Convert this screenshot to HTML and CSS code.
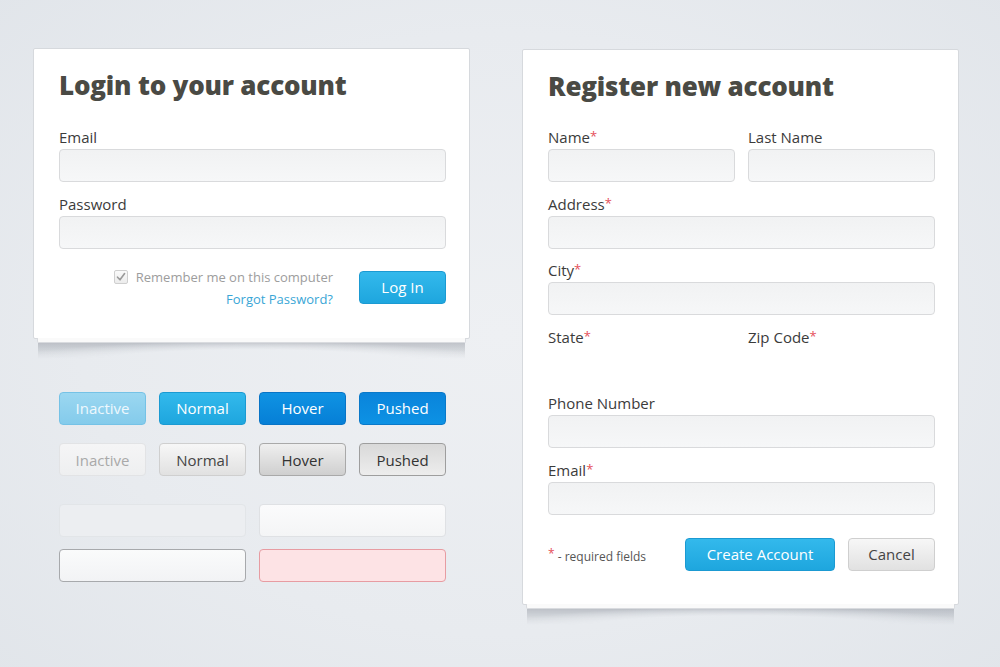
FILE: index.html
```html
<!DOCTYPE html>
<html>
<head>
<meta charset="utf-8">
<link rel="stylesheet" href="styles.css">
</head>
<body>
<div class="page">
  <div class="left">
    <div class="card login">
      <h1 class="title">Login to your account</h1>
      <div class="field">
        <label class="label">Email</label>
        <div class="input"></div>
      </div>
      <div class="field">
        <label class="label">Password</label>
        <div class="input"></div>
      </div>
      <div class="login-actions">
        <div class="remember">
          <div class="check-row">
            <span class="checkbox"><svg width="10" height="10" viewBox="0 0 10 10"><path d="M1.5 5.2 L4 7.8 L8.6 1.6" fill="none" stroke="#9a9a9a" stroke-width="1.6" stroke-linecap="round" stroke-linejoin="round"/></svg></span>
            <span class="remember-text">Remember me on this computer</span>
          </div>
          <a class="forgot">Forgot Password?</a>
        </div>
        <div class="btn btn-blue btn-login">Log In</div>
      </div>
    </div>

    <div class="states">
      <div class="btn btn-blue-inactive">Inactive</div>
      <div class="btn btn-blue">Normal</div>
      <div class="btn btn-blue-hover">Hover</div>
      <div class="btn btn-blue-pushed">Pushed</div>
      <div class="btn btn-gray-inactive">Inactive</div>
      <div class="btn btn-gray">Normal</div>
      <div class="btn btn-gray-hover">Hover</div>
      <div class="btn btn-gray-pushed">Pushed</div>
    </div>

    <div class="input-states">
      <div class="input-s disabled"></div>
      <div class="input-s normal"></div>
      <div class="input-s focus"></div>
      <div class="input-s error"></div>
    </div>
  </div>

  <div class="right">
    <div class="card register">
      <h1 class="title">Register new account</h1>
      <div class="row2">
        <div class="field">
          <label class="label">Name<span class="req">*</span></label>
          <div class="input"></div>
        </div>
        <div class="field">
          <label class="label">Last Name</label>
          <div class="input"></div>
        </div>
      </div>
      <div class="field">
        <label class="label">Address<span class="req">*</span></label>
        <div class="input"></div>
      </div>
      <div class="field">
        <label class="label">City<span class="req">*</span></label>
        <div class="input"></div>
      </div>
      <div class="row2">
        <div class="field">
          <label class="label">State<span class="req">*</span></label>
          <div class="spacer"></div>
        </div>
        <div class="field">
          <label class="label">Zip Code<span class="req">*</span></label>
          <div class="spacer"></div>
        </div>
      </div>
      <div class="field">
        <label class="label">Phone Number</label>
        <div class="input"></div>
      </div>
      <div class="field last">
        <label class="label">Email<span class="req">*</span></label>
        <div class="input"></div>
      </div>
      <div class="reg-actions">
        <div class="note"><span class="req">*</span> - required fields</div>
        <div class="btn btn-blue btn-create">Create Account</div>
        <div class="btn btn-gray btn-cancel">Cancel</div>
      </div>
    </div>
  </div>
</div>
</body>
</html>
```

FILE: styles.css
```css
html, body {
  margin: 0;
  padding: 0;
}
body {
  width: 1000px;
  height: 667px;
  overflow: hidden;
  font-family: "Open Sans", "Noto Sans", sans-serif;
  background: radial-gradient(ellipse 70% 75% at 50% 50%, #eef0f3 0%, #e8ebef 60%, #e1e5ea 100%);
}
.page {
  display: flex;
  align-items: flex-start;
  gap: 52px;
  padding: 48px 0 0 33px;
}
.left {
  width: 437px;
  display: flex;
  flex-direction: column;
}
.right {
  width: 437px;
  margin-top: 1px;
}
.card {
  position: relative;
  box-sizing: border-box;
  width: 437px;
  background: #fff;
  border: 1px solid #d6d9dd;
  border-radius: 2px;
  padding: 20px 23px 33px 25px;
}
.card.login {
  padding-bottom: 30px;
}
.card::before {
  content: "";
  position: absolute;
  left: 3px;
  right: 3px;
  bottom: -5px;
  height: 4px;
  background: #fafafa;
  border: 1px solid #d9dbdf;
  border-top: none;
  border-radius: 0 0 2px 2px;
}
.card::after {
  content: "";
  position: absolute;
  left: 4px;
  right: 4px;
  top: calc(100% + 5px);
  height: 16px;
  background: linear-gradient(to bottom, rgba(130,136,146,0.42), rgba(130,136,146,0));
  -webkit-mask-image: radial-gradient(ellipse 60% 130% at 50% 120%, transparent 60%, #000 100%);
  mask-image: radial-gradient(ellipse 60% 130% at 50% 120%, transparent 60%, #000 100%);
}
.title {
  margin: 0 0 27px 0;
  font-size: 26px;
  line-height: 32px;
  font-weight: 800;
  color: #4a4a44;
  letter-spacing: -0.2px;
}
.register .title {
  margin-bottom: 26px;
}
.field {
  display: flex;
  flex-direction: column;
  margin-bottom: 12.6px;
}
.field.last {
  margin-bottom: 0;
}
.label {
  font-size: 15px;
  line-height: 18px;
  height: 18px;
  color: #3b3b3b;
  margin-bottom: 3px;
}
.req {
  color: #e5505a;
  font-size: 13px;
  line-height: 0;
  vertical-align: 2px;
}
.input {
  box-sizing: border-box;
  height: 33px;
  background: linear-gradient(to bottom, #f1f2f3, #f6f7f8);
  border: 1px solid #d9dadc;
  border-radius: 4px;
}
.spacer {
  height: 33px;
}
.row2 {
  display: grid;
  grid-template-columns: 187px 187px;
  column-gap: 13px;
}
.login-actions {
  display: flex;
  justify-content: flex-end;
  align-items: flex-start;
  gap: 26px;
  margin-top: 19px;
}
.btn-login {
  margin-top: 3px;
}
.remember {
  display: flex;
  flex-direction: column;
  align-items: flex-end;
}
.check-row {
  display: flex;
  align-items: center;
  gap: 8px;
}
.checkbox {
  box-sizing: border-box;
  width: 14px;
  height: 14px;
  border: 1px solid #cfcfcf;
  border-radius: 2px;
  background: linear-gradient(#fafafa, #ececec);
  display: flex;
  align-items: center;
  justify-content: center;
}
.remember-text {
  font-size: 13px;
  line-height: 18px;
  color: #9d9d9d;
}
.forgot {
  font-size: 13px;
  line-height: 18px;
  margin-top: 4px;
  color: #39a6d6;
}
.btn {
  box-sizing: border-box;
  width: 87px;
  height: 33px;
  border-radius: 4px;
  display: flex;
  align-items: center;
  justify-content: center;
  font-size: 15px;
  border: 1px solid transparent;
}
.btn-blue {
  background: linear-gradient(to bottom, #33b9ec, #1ea6de);
  border-color: #1b9ad2;
  color: #fff;
}
.btn-blue-inactive {
  background: linear-gradient(to bottom, #9bd7f1, #84cbeb);
  border-color: #75c2e6;
  color: #eef8fd;
}
.btn-blue-hover {
  background: linear-gradient(to bottom, #0f93e3, #067fd6);
  border-color: #0874c6;
  color: #fff;
}
.btn-blue-pushed {
  background: linear-gradient(to bottom, #0a84db, #0d92e4);
  border-color: #0a79c9;
  color: #fff;
}
.btn-gray-inactive {
  background: linear-gradient(to bottom, #f5f5f6, #eeeff0);
  border-color: #e2e3e5;
  color: #a9a9a9;
}
.btn-gray {
  background: linear-gradient(to bottom, #f7f7f7, #e1e1e1);
  border-color: #cfcfcf;
  color: #444;
}
.btn-gray-hover {
  background: linear-gradient(to bottom, #efefef, #cfcfcf);
  border-color: #a9a9a9;
  color: #333;
}
.btn-gray-pushed {
  background: linear-gradient(to bottom, #d9d9d9, #ededed);
  border-color: #9e9e9e;
  color: #333;
}
.states {
  display: grid;
  grid-template-columns: repeat(4, 87px);
  column-gap: 13px;
  row-gap: 18px;
  padding-left: 26px;
  margin-top: 53px;
}
.states .btn-gray,
.states .btn-gray-hover,
.states .btn-gray-pushed,
.states .btn-gray-inactive {
  padding-top: 2px;
}
.input-states {
  display: grid;
  grid-template-columns: 187px 187px;
  column-gap: 13px;
  row-gap: 12px;
  padding-left: 26px;
  margin-top: 28px;
}
.input-s {
  box-sizing: border-box;
  height: 33px;
  border-radius: 4px;
  border: 1px solid transparent;
}
.input-s.disabled {
  background: #eceef1;
  border-color: #e2e5e8;
}
.input-s.normal {
  background: linear-gradient(to bottom, #fbfbfc, #f4f5f6);
  border-color: #dfe1e4;
}
.input-s.focus {
  background: linear-gradient(to bottom, #fafbfb, #f2f3f5);
  border-color: #a7a9ac;
}
.input-s.error {
  background: #fde3e5;
  border-color: #e79ca2;
}
.reg-actions {
  display: flex;
  align-items: center;
  margin-top: 23px;
}
.note {
  font-size: 12px;
  line-height: 18px;
  color: #555;
  width: 137px;
  margin-top: 5px;
}
.note .req {
  font-size: 12px;
  vertical-align: 3px;
}
.btn-create {
  width: 150px;
  height: 33px;
}
.btn-cancel {
  width: 87px;
  margin-left: 13px;
}
```
